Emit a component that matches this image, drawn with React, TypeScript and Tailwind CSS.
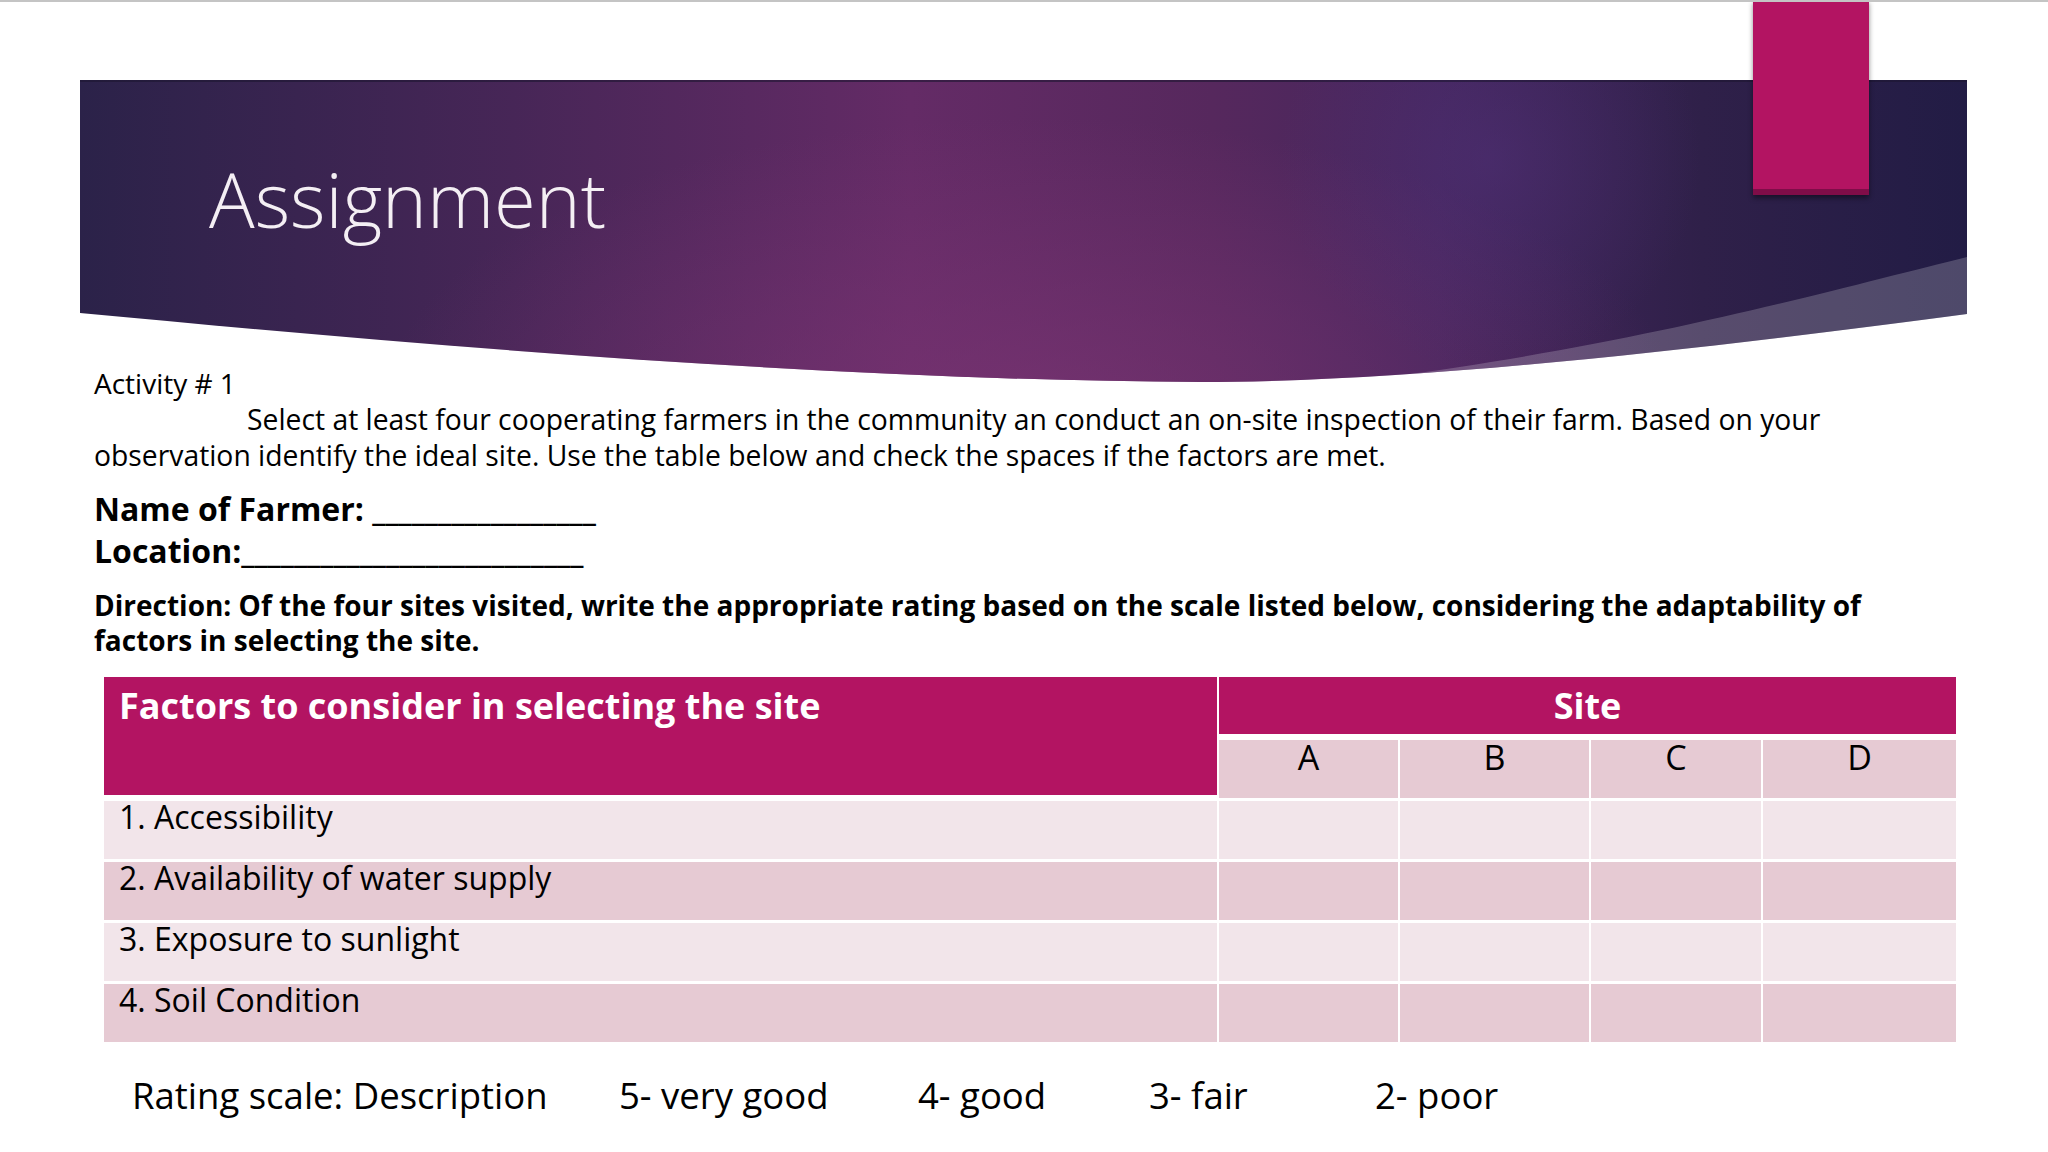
import React from 'react'

const factors = ['1. Accessibility', '2. Availability of water supply', '3. Exposure to sunlight', '4. Soil Condition']
const sites = ['A', 'B', 'C', 'D']

const Banner = () => {
  return (
    <div className="relative ml-[80px] h-[285px] w-[1887px]">
      <svg className="absolute left-0 top-0" width="1887" height="302" viewBox="0 0 1887 302">
        <defs>
          <linearGradient id="bannerFill" x1="0" y1="0" x2="1" y2="0">
            <stop offset="0" stopColor="#2b2249" />
            <stop offset="0.23" stopColor="#472657" />
            <stop offset="0.44" stopColor="#642b66" />
            <stop offset="0.6" stopColor="#56285d" />
            <stop offset="0.72" stopColor="#44265d" />
            <stop offset="0.86" stopColor="#2f2049" />
            <stop offset="1" stopColor="#221c45" />
          </linearGradient>
          <radialGradient
            id="warmGlow"
            cx="0"
            cy="0"
            r="650"
            gradientUnits="userSpaceOnUse"
            gradientTransform="translate(950 330) scale(1 0.45)"
          >
            <stop offset="0" stopColor="#7a3473" stopOpacity="0.75" />
            <stop offset="1" stopColor="#7a3473" stopOpacity="0" />
          </radialGradient>
          <radialGradient id="coolGlow" cx="1410" cy="80" r="210" gradientUnits="userSpaceOnUse">
            <stop offset="0" stopColor="#553482" stopOpacity="0.4" />
            <stop offset="1" stopColor="#553482" stopOpacity="0" />
          </radialGradient>
          <clipPath id="bannerClip">
            <path d="M0,0 H1887 V234 C1650,265 1350,302 1120,302 C750,300 350,266 0,233 Z" />
          </clipPath>
        </defs>
        <g clipPath="url(#bannerClip)">
          <rect x="0" y="0" width="1887" height="302" fill="url(#bannerFill)" />
          <rect x="0" y="0" width="1887" height="302" fill="url(#warmGlow)" />
          <rect x="0" y="0" width="1887" height="302" fill="url(#coolGlow)" />
          <path d="M1887,177 C1760,208 1560,265 1300,298 L1250,320 L1887,320 Z" fill="#ffffff" fillOpacity="0.2" />
          <rect x="0" y="0" width="1887" height="2" fill="#1c1630" fillOpacity="0.6" />
        </g>
      </svg>
      <h1 className="relative pl-[129px] pt-[81px] text-[76px] leading-[76px] font-light text-[#f4eff4]">
        Assignment
      </h1>
    </div>
  )
}

const App = () => {
  return (
    <div className="relative h-[1152px] w-[2048px] overflow-hidden border-t-2 border-[#c4c4c4] bg-white font-['Open_Sans',sans-serif] text-black">
      <div className="pt-[78px]">
        <Banner />
      </div>

      {/* ribbon tab hanging over the banner */}
      <div className="absolute -top-[2px] left-[1753px] h-[195px] w-[116px] border-b-[6px] border-[#7f0d48] bg-[#b31462] shadow-[0_3px_5px_rgba(0,0,0,0.45)]" />

      <div className="pl-[94px]">
        <p className="text-[28px] leading-[36px]">Activity # 1</p>
        <p className="indent-[153px] text-[28.3px] leading-[36px] whitespace-nowrap">
          Select at least four cooperating farmers in the community an conduct an on-site inspection of their farm. Based on your
          <br />
          observation identify the ideal site. Use the table below and check the spaces if the factors are met.
        </p>
        <div className="mt-[15px] text-[32px] leading-[42px] font-bold">
          <p>Name of Farmer: _________________</p>
          <p>Location:__________________________</p>
        </div>
        <p className="mt-[16px] text-[28px] leading-[35px] font-bold whitespace-nowrap">
          Direction: Of the four sites visited, write the appropriate rating based on the scale listed below, considering the adaptability of
          <br />
          factors in selecting the site.
        </p>
      </div>

      <div className="ml-[104px] mt-[19px] w-[1852px]">
        <div className="flex gap-[2px]">
          <div className="h-[118px] w-[1113px] bg-[#b31462] pl-[15px] pt-[6px] text-[36px] leading-[46px] font-bold text-white">
            Factors to consider in selecting the site
          </div>
          <div className="flex flex-1 flex-col">
            <div className="h-[57px] bg-[#b31462] pt-[6px] text-center text-[36px] leading-[46px] font-bold text-white">
              Site
            </div>
            <div className="mt-[6px] grid h-[58px] grid-cols-[179px_189px_170px_193px] gap-x-[2px]">
              {sites.map((site) => (
                <div key={site} className="bg-[#e6cad3] text-center text-[34px] leading-[34px]">
                  {site}
                </div>
              ))}
            </div>
          </div>
        </div>
        <div className="mt-[3px] flex flex-col gap-[3px]">
          {factors.map((factor, index) => {
            const rowBg = index % 2 === 0 ? 'bg-[#f2e5ea]' : 'bg-[#e6cad3]'
            return (
              <div key={factor} className="grid h-[58px] grid-cols-[1113px_179px_189px_170px_193px] gap-x-[2px]">
                <div className={`${rowBg} pl-[15px] text-[32px] leading-[32px]`}>{factor}</div>
                {sites.map((site) => (
                  <div key={site} className={rowBg} />
                ))}
              </div>
            )
          })}
        </div>
      </div>

      <div className="mt-[29px] flex pl-[132px] text-[36.5px] leading-[49px] whitespace-nowrap">
        <span className="w-[487px]">Rating scale: Description</span>
        <span className="w-[299px]">5- very good</span>
        <span className="w-[231px]">4- good</span>
        <span className="w-[226px]">3- fair</span>
        <span>2- poor</span>
      </div>
    </div>
  )
}

export default App
